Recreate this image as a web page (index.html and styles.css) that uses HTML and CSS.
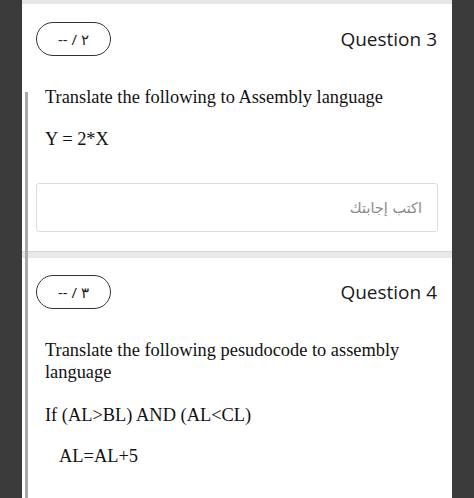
FILE: index.html
```html
<!DOCTYPE html>
<html lang="ar">
<head>
<meta charset="utf-8">
<link rel="stylesheet" href="styles.css">
</head>
<body>
<div class="page">
  <div class="topband"></div>
  <div class="card-head">
    <div class="pill" dir="ltr">-- / ٢</div>
    <div class="qtitle" dir="ltr">Question 3</div>
  </div>
  <div class="marked">
    <div class="qbody q3">
      <p class="line">Translate the following to Assembly language</p>
      <p class="line eq">Y = 2*X</p>
    </div>
    <div class="answer" dir="rtl">اكتب إجابتك</div>
    <div class="divider"></div>
    <div class="card-head h2">
      <div class="pill" dir="ltr">-- / ٣</div>
      <div class="qtitle" dir="ltr">Question 4</div>
    </div>
    <div class="qbody q4">
      <p class="line">Translate the following pesudocode to assembly language</p>
      <p class="line cond">If (AL&gt;BL) AND (AL&lt;CL)</p>
      <p class="line stmt">AL=AL+5</p>
    </div>
  </div>
</div>
</body>
</html>
```
FILE: styles.css
```css
html, body {
  margin: 0;
  padding: 0;
  height: 100%;
}
body {
  background: #3b3b3b;
  overflow: hidden;
}
.page {
  margin-left: 22px;
  width: 430px;
  min-height: 100%;
  background: #ffffff;
  display: flex;
  flex-direction: column;
}
.topband {
  height: 4px;
  background: #e6e6e6;
}
.card-head {
  display: flex;
  justify-content: space-between;
  align-items: center;
  padding: 18px 15px 0 14px;
  height: 34px;
}
.pill {
  box-sizing: border-box;
  width: 75px;
  height: 34px;
  border: 1.5px solid #333;
  border-radius: 17px;
  display: flex;
  align-items: center;
  justify-content: center;
  font-family: "Open Sans", "DejaVu Sans", sans-serif;
  font-size: 15px;
  color: #222;
}
.qtitle {
  font-family: "Open Sans", "DejaVu Sans", sans-serif;
  font-size: 19px;
  color: #1a1a1a;
}
.marked {
  position: relative;
  flex: 1;
  margin-top: 30px;
}
.marked::before {
  content: "";
  position: absolute;
  left: 3px;
  top: 6px;
  bottom: 0;
  width: 3px;
  background: #a9a9a9;
  z-index: 1;
}
.qbody {
  padding-left: 23px;
  font-family: "Liberation Serif", "Times New Roman", serif;
  font-size: 18.4px;
  line-height: 22px;
  color: #111;
}
.line {
  margin: 0;
}
.eq {
  margin-top: 20px;
}
.answer {
  box-sizing: border-box;
  margin: 33px 14px 0 14px;
  height: 49px;
  border: 1px solid #dcdcdc;
  border-radius: 3px;
  padding: 0 15px;
  display: flex;
  align-items: center;
  font-family: "DejaVu Sans", "Noto Sans", sans-serif;
  font-size: 14.5px;
  color: #8a8a8a;
}
.divider {
  margin-top: 19px;
  height: 6px;
  background: #e8e8e8;
  border-top: 1px solid #d8d8d8;
}
.h2 {
  padding-top: 17px;
}
.q4 {
  margin-top: 30px;
  padding-right: 40px;
}
.cond {
  margin-top: 21px;
}
.stmt {
  margin-top: 19px;
  padding-left: 14px;
}
```
